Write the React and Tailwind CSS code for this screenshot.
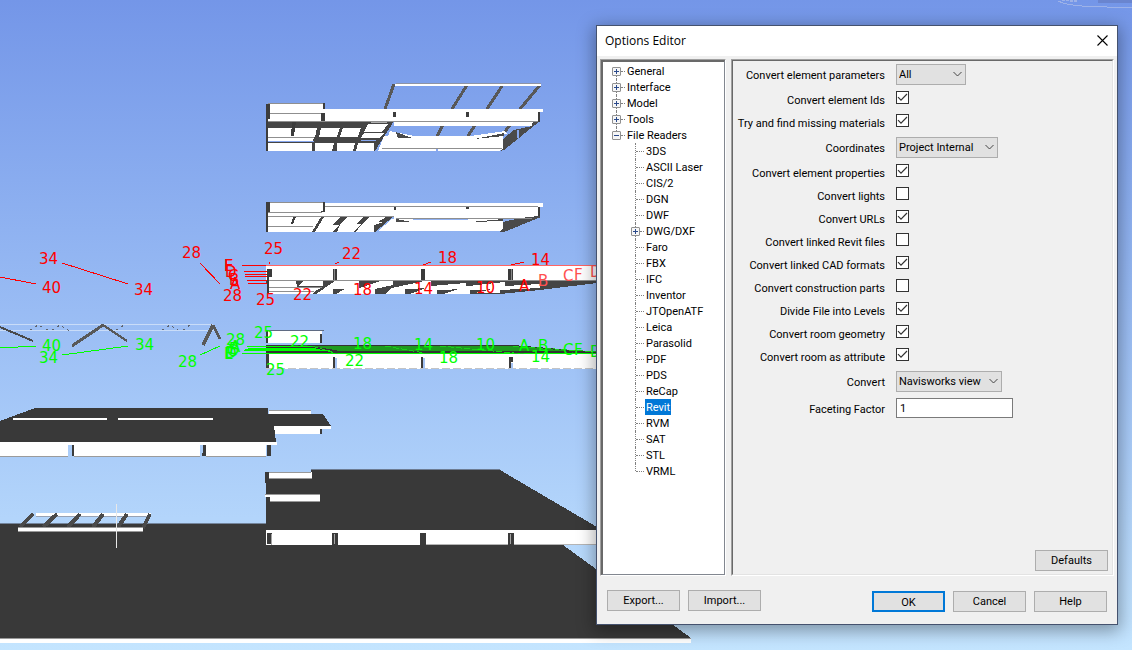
import React, { useState } from "react";

const rootNodes = ["General", "Interface", "Model", "Tools"];

const readers = [
  "3DS",
  "ASCII Laser",
  "CIS/2",
  "DGN",
  "DWF",
  "DWG/DXF",
  "Faro",
  "FBX",
  "IFC",
  "Inventor",
  "JTOpenATF",
  "Leica",
  "Parasolid",
  "PDF",
  "PDS",
  "ReCap",
  "Revit",
  "RVM",
  "SAT",
  "STL",
  "VRML",
];

const fields = [
  { id: "params", label: "Convert element parameters", type: "select", value: "All", width: "w-[70px]" },
  { id: "ids", label: "Convert element Ids", type: "check", value: true },
  { id: "materials", label: "Try and find missing materials", type: "check", value: true },
  { id: "coords", label: "Coordinates", type: "select", value: "Project Internal", width: "w-[102px]" },
  { id: "props", label: "Convert element properties", type: "check", value: true },
  { id: "lights", label: "Convert lights", type: "check", value: false },
  { id: "urls", label: "Convert URLs", type: "check", value: true },
  { id: "linkedRevit", label: "Convert linked Revit files", type: "check", value: false },
  { id: "linkedCad", label: "Convert linked CAD formats", type: "check", value: true },
  { id: "parts", label: "Convert construction parts", type: "check", value: false },
  { id: "levels", label: "Divide File into Levels", type: "check", value: true },
  { id: "roomGeometry", label: "Convert room geometry", type: "check", value: true },
  { id: "roomAttribute", label: "Convert room as attribute", type: "check", value: true },
  { id: "convert", label: "Convert", type: "select", value: "Navisworks view", width: "w-[106px]" },
  { id: "faceting", label: "Faceting Factor", type: "text", value: "1" },
];

// grid labels: text, x, baseline
const redLabels = [
  ["34", 39, 264], ["40", 42, 293], ["34", 134, 295], ["28", 182, 258],
  ["25", 264, 254], ["28", 223, 301], ["25", 256, 305], ["22", 293, 300],
  ["22", 342, 259], ["18", 438, 263], ["14", 531, 265], ["18", 353, 295],
  ["14", 414, 294], ["10", 476, 293], ["A", 519, 291], ["B", 538, 286],
  ["C", 563, 281], ["F", 574, 280], ["D", 590, 277],
  ["F", 224, 271], ["E", 224, 271], ["D", 225, 277], ["C", 228, 281], ["B", 229, 285], ["A", 230, 289],
];

const greenLabels = [
  ["40", 42, 351], ["34", 39, 363], ["34", 135, 350], ["28", 178, 367],
  ["28", 226, 345], ["25", 254, 338], ["22", 290, 347], ["25", 266, 375],
  ["18", 353, 349], ["14", 414, 350], ["10", 476, 350], ["A", 519, 351],
  ["B", 538, 351], ["C", 563, 355], ["F", 574, 355], ["D", 590, 357],
  ["22", 345, 366], ["18", 439, 363], ["14", 531, 362],
  ["A", 230, 352], ["B", 229, 354], ["C", 227, 356], ["D", 225, 358], ["E", 224, 359],
];

const Scene = () => (
  <svg
    width="1132"
    height="650"
    viewBox="0 0 1132 650"
    className="block"
    shapeRendering="crispEdges"
    aria-hidden="true"
  >
    {/* view cube ring */}
    <g fill="none" stroke="#9db2e8" strokeWidth="1">
      <path d="M1058 1 Q1066 5 1082 6 L1132 8" />
      <path d="M1062 0 L1078 1" strokeWidth="2" strokeDasharray="3 1" />
      <path d="M1098 1 H1132" stroke="#6a85cf" strokeWidth="3" />
    </g>

    {/* roof level */}
    <g>
      <g stroke="#585858" strokeWidth="3">
        <path d="M394 84 L385 109 M467 85 L452 109 M502 86 L487 109 M540 85 L520 109" />
        <path d="M443 125 L437 136 M475 125 L468 136 M510 125 L503 134" />
      </g>
      <path d="M396 83 H541 V86 H395 Z" fill="#fff" />
      <path d="M396 83.5 H541" stroke="#8d93a5" />
      <path d="M268 121 H394 L375 151 H268 Z" fill="#454545" />
      <g fill="#fff">
        <path d="M268 103 H324 V121 H268 Z" />
        <path d="M324 109 H543 V112 H538 V121 H324 Z" />
        <path d="M394 121 H533 V126 H394 Z" />
        <path d="M268 128 H317 L315 137 H268 Z" />
        <path d="M321 128 H340 L337 137 H319 Z" />
        <path d="M343 128 H361 L358 137 H340 Z" />
        <path d="M368 124 H388 L382 132 H364 Z" />
        <path d="M364 133 H384 L380 138 H361 Z" />
        <path d="M268 138 H314 L313 141 H268 Z" />
        <path d="M268 143 H312 V151 H268 Z" />
        <path d="M315 143 H334 L332 151 H315 Z" />
        <path d="M337 143 H355 L353 151 H337 Z" />
        <path d="M358 143 H374 V151 H356 Z" />
        <path d="M384 136 H503 V149 L499 151 H378 Z" />
        <path d="M390 131 L414 136 V139 L388 136 Z" />
        <path d="M470 136 L505 131 L507 134 L474 139 Z" />
      </g>
      <path d="M268 141.500 H314 M361 140.500 H376" stroke="#86a6ee" />
      <path d="M374 121 H388 L386 123 H370 Z" fill="#b0b0b0" />
      <path d="M396 132 L412 138 H398 Z M474 139 L504 133 V136 Z" fill="#4a4a4a" />
      <path d="M503 139 L514 130 L532 126 L533 121 H540 L504 150 L500 151 L503 148 Z" fill="#4a4a4a" />
      <path d="M518 130 V138" stroke="#86a6ee" strokeWidth="2" />
      <path d="M268 103.500 H324 M268 113.500 H322 M268 121.500 H538 M268 137.500 H314 M382 148.500 H502" stroke="#8f8f8f" />
      <g fill="#3c3c3c">
        <path d="M266 104 H270 V119 H268 V151 H266 Z" />
        <path d="M323 103 H325 V109 H323 Z M321 113 H325 V121 H321 Z" />
        <path d="M393 112 H396 V117 H393 Z M466 112 H469 V117 H466 Z" />
        <path d="M538 112 H540 V122 H538 Z M292 122 H296 L294 136 H291 Z" />
      </g>
      <path d="M437 149 V152" stroke="#86a6ee" strokeWidth="2" />
    </g>

    {/* upper level */}
    <g>
      <path d="M268 216 H394 L375 232 H268 Z" fill="#454545" />
      <g fill="#fff">
        <path d="M268 202 H324 V216 H268 Z" />
        <path d="M324 203 H543 V207 H538 V217 L532 219 H394 V216 H324 Z" />
        <path d="M268 217 H321 L312 232 H268 Z" />
        <path d="M324 217 H340 L333 225 H340 L332 232 H315 Z" />
        <path d="M347 217 H363 L357 224 H361 L353 232 H337 L340 225 Z" />
        <path d="M369 217 H386 L378 222 H384 L374 225 V232 H356 L361 225 Z" />
        <path d="M392 219 H503 V231 H378 Z" />
      </g>
      <path d="M503 222 L520 218 L538 216 L541 217 L504 232 H499 L503 229 Z" fill="#4a4a4a" />
      <path d="M396 219 L412 222 H396 Z M470 222 L503 219 V221 Z" fill="#4a4a4a" />
      <path d="M413 219.500 H468" stroke="#8fb0f0" />
      <path d="M268 202.500 H324 M268 212.500 H322 M324 206.500 H538 M268 216.500 H394 M396 218.500 H532 M268 226.500 H313" stroke="#8f8f8f" />
      <g fill="#3c3c3c">
        <path d="M266 202 H270 V212 H268 V232 H266 Z" />
        <path d="M323 202 H325 V212 H321 V211 H323 Z" />
        <path d="M394 207 H396 V210 H394 Z M466 207 H469 V209 H466 Z" />
        <path d="M538 207 H540 V216 H538 Z M293 217 H296 L293 224 H291 Z" />
      </g>
    </g>

    {/* red grid level */}
    <g>
      <path d="M266 281 H597 V283 L540 290 L500 294 H268 Z" fill="#454545" />
      <g fill="#fff">
        <path d="M266 265 H597 V281 H266 Z" />
        <path d="M268 281 H296 L297 287 H323 L315 291 L313 294 H268 Z" />
        <path d="M303 281 H323 V286 H299 Z" />
        <path d="M335 281 H359 V289 L333 289 V294 H316 Z" />
        <path d="M380 281 H393 V285 L375 289 V294 H336 L345 289 L359 288 Z" />
        <path d="M424 281 H431 V288 L405 289 V294 H385 L392 288 Z" />
        <path d="M431 286 L466 283 V289 L437 290 V294 H410 Z" />
        <path d="M468 286 L505 282 V289 L470 290 V294 H443 Z" />
        <path d="M505 286 L540 284 V288 L500 290 V293 H475 Z" />
      </g>
      <path d="M268 280.500 H597 M268 287.500 H322 M268 291.500 H314" stroke="#8f8f8f" />
      <g fill="#3a3a3a">
        <path d="M267 269 H272 V277 H269 V293 H267 Z" />
        <path d="M333 269 H337 V280 H333 Z M421 269 H425 V280 H421 Z M508 269 H513 V280 H508 Z" />
      </g>
      <path d="M334.500 269 V280 M511.500 269 V280" stroke="#8a8a8a" />
    </g>

    {/* roof truss */}
    <g fill="none">
      <path d="M0 324.500 H213 M0 330.500 H214" stroke="#c9dcf8" />
      <path
        d="M30 330 L38 325 L48 330 M52 330 L60 325 L70 331 M116 330 L124 325 M162 330 L170 325 L178 330 M183 330 L190 325"
        stroke="#5c6470"
        strokeDasharray="2 4"
      />
      <path d="M0 327 L33 341" stroke="#4a4a4a" strokeWidth="2" />
      <g stroke="#585858">
        <path d="M72 346 L103 325" strokeWidth="3" />
        <path d="M103 325 L127 341" strokeWidth="2" />
        <path d="M203 345 L213 325" strokeWidth="4" />
        <path d="M213 325 L220 339" strokeWidth="3" />
      </g>
    </g>

    {/* green grid level */}
    <g>
      <path d="M268 330 H322 V343 H268 Z" fill="#fff" />
      <path d="M268 330.500 H324" stroke="#5f6b82" />
      <path d="M320 334 H322 V343 H320 Z M266 330 H268 V343 H266 Z" fill="#3c3c3c" />
      <path d="M266 353 H597 V369 H266 Z" fill="#fff" />
      <path d="M266 345 H513 L597 352 V354 H266 Z" fill="#333" />
      <path d="M312 346 H513 L570 351 H340 Z" fill="#1e9a1e" />
      <path d="M266 368.500 H597" stroke="#c4c4c4" strokeDasharray="8 3" />
      <g fill="#3c3c3c">
        <path d="M266 354 H269 V368 H266 Z M333 357 H335 V368 H333 Z" />
        <path d="M421 357 H423 V368 H421 Z M509 357 H513 V362 H511 V368 H509 Z" />
      </g>
      <path d="M336 358 V369 M424 358 V369 M512 363 V369" stroke="#a6c4f4" strokeWidth="2" />
    </g>

    {/* grid lines */}
    <g fill="none" stroke="#f00">
      <path d="M0 277 L36 284 M62 263 L128 284 M200 263 L220 284" />
      <path d="M242 265.500 H267 M244 271.500 H267 M245 274.500 H267 M245 276.500 H267 M247 280.500 H267 M248 283.500 H267" />
      <path d="M266 265.500 H597" stroke="#ff6464" />
      <path d="M335 264 L339 262 M423 265 L431 262 M511 265 L524 262 M269 264 V262" />
    </g>
    <g fill="none" stroke="#0f0">
      <path d="M0 348 L36 346 M62 355 L128 346 M200 355 L220 346" />
      <path d="M242 353.500 H597 M244 350.500 H330 M247 346.500 H312 M248 348.500 H316 M245 349.500 H320" />
      <path d="M312 346 L338 354 M385 346 L430 354 M440 346 L524 354 M513 346 L597 352" stroke="#19d019" strokeDasharray="6 2" />
    </g>

    <g fontFamily="'DejaVu Sans', Verdana, sans-serif" fontSize="15">
      {redLabels.map(([text, x, y], i) => (
        <text key={i} x={x} y={y} fill={y < 292 && x > 535 ? "#ff5050" : "#f00"}>
          {text}
        </text>
      ))}
      {greenLabels.map(([text, x, y], i) => (
        <text key={i} x={x} y={y} fill="#0f0">
          {text}
        </text>
      ))}
    </g>

    {/* second floor slab */}
    <g>
      <path d="M0 421 L35 408 H268 V414 H323 L331 426 H274 L276 442 H0 Z" fill="#393939" />
      <g fill="#fff">
        <path d="M13 418 H107 V420 H13 Z M118 418 H213 V420 H118 Z" />
        <path d="M269 410 H311 V414 H269 Z" />
        <path d="M274 426 H331 V429 H320 V434 H275 Z" />
        <path d="M0 442 H277 V445 H266 V456 H206 V445 H200 V456 H74 V445 H68 V456 H0 Z" />
      </g>
      <path d="M0 456.500 H68 M74 456.500 H200 M206 456.500 H266 M269 410.500 H311" stroke="#9b9b9b" />
      <path d="M72 445 H74 V456 H72 Z M203 445 H206 V456 H202 V453 H203 Z M267 445 H271 V456 H267 Z M320 429 H322 V434 H320 Z" fill="#3c3c3c" />
    </g>

    {/* ground slab */}
    <path d="M0 524 H266 V545 H563 L691 638 H0 Z" fill="#393939" />
    <path d="M0 523.500 H266" stroke="#74859c" />
    <path d="M0 638 H691 V643 H0 Z" fill="#fff" />
    <path d="M0 638.500 H691" stroke="#999" />

    {/* first floor slab */}
    <g>
      <path d="M265 472 H311 V470 H500 L597 527 V530 H266 V483 H265 Z" fill="#393939" />
      <path d="M311 469.500 H500" stroke="#6d7c92" />
      <g fill="#fff">
        <path d="M269 472 H312 V478 H269 Z" />
        <path d="M265 494 H320 V501 H270 V497 H265 Z" />
        <path d="M266 530 H597 V545 H266 Z" />
      </g>
      <path d="M269 472.500 H311 M269 478.500 H312 M265 494.500 H320 M270 501.500 H320" stroke="#999" />
      <path d="M426 544.500 H597" stroke="#b5b5b5" />
      <path d="M267 533 H272 V544 H267 Z M332 533 H338 V545 H332 Z M420 533 H426 V545 H420 Z M508 533 H514 V545 H508 Z" fill="#3a3a3a" />
      <path d="M334.500 534 V544 M510.500 534 V544 M271.500 534 V545" stroke="#a5a5a5" />
    </g>

    {/* skylight frame */}
    <g>
      <path d="M36 513 H151 V516 H36 Z" fill="#fff" />
      <path d="M36 516.500 H150" stroke="#97a2b4" />
      <path d="M33 514 L20 527 M57 514 L43 527 M80 514 L68 527 M103 514 L93 527 M127 514 L118 527 M150 514 L143 528" stroke="#4a4a4a" strokeWidth="4" />
      <path d="M18 527 H143 V531 H18 Z" fill="#fff" />
      <path d="M18 527.500 H143 M18 531.500 H143" stroke="#999" />
      <path d="M116.500 504 V548" stroke="#e8e8e8" />
    </g>
  </svg>
);

const Expander = ({ open, first, last, onClick, label }) => (
  <span className="flex h-4 w-[9px] flex-col items-center">
    <span className={`w-px flex-1 ${first ? "" : "border-l border-dotted border-[#808080]"}`} />
    <button
      type="button"
      aria-label={label}
      onClick={onClick}
      className="flex h-[9px] w-[9px] items-center justify-center rounded-[1px] border border-[#919191] bg-[#f6f6f6]"
    >
      <svg width="5" height="5" viewBox="0 0 5 5" stroke="#2b4a8b" shapeRendering="crispEdges">
        <path d={open ? "M0 2.500 H5" : "M0 2.500 H5 M2.500 0 V5"} />
      </svg>
    </button>
    <span className={`h-[3px] w-px ${last ? "" : "border-l border-dotted border-[#808080]"}`} />
  </span>
);

const Tree = () => {
  const [selected, setSelected] = useState("Revit");
  const [open, setOpen] = useState(true);

  return (
    <ul className="h-full py-px">
      {rootNodes.map((name, i) => (
        <li key={name} className="flex h-4 items-center pl-[9px]">
          <Expander first={i === 0} label={`Expand ${name}`} />
          <span className="w-1 border-t border-dotted border-[#808080]" />
          <button type="button" className="px-0.5 pt-0.5 leading-[14px]">
            {name}
          </button>
        </li>
      ))}
      <li>
        <div className="flex h-4 items-center pl-[9px]">
          <Expander open={open} last label="Toggle File Readers" onClick={() => setOpen(!open)} />
          <span className="w-1 border-t border-dotted border-[#808080]" />
          <button type="button" className="px-0.5 pt-0.5 leading-[14px]">
            File Readers
          </button>
        </div>
        {open && (
          <ul>
            {readers.map((name, i) => (
              <li key={name} className="flex h-4 items-center pl-7">
                {name === "DWG/DXF" ? (
                  <>
                    <Expander label="Expand DWG/DXF" />
                    <span className="w-1 border-t border-dotted border-[#808080]" />
                  </>
                ) : (
                  <>
                    <span
                      className={`ml-1 w-px border-l border-dotted border-[#808080] ${
                        i === readers.length - 1 ? "h-2 self-start" : "h-4"
                      }`}
                    />
                    <span className="w-2 border-t border-dotted border-[#808080]" />
                  </>
                )}
                <button
                  type="button"
                  onClick={() => setSelected(name)}
                  className={`ml-px px-px pt-0.5 leading-[14px] whitespace-nowrap ${
                    selected === name ? "bg-[#0078d7] text-white" : ""
                  }`}
                >
                  {name}
                </button>
              </li>
            ))}
          </ul>
        )}
      </li>
    </ul>
  );
};

const Field = ({ field, value, onChange }) => {
  const isCheck = field.type === "check";

  return (
    <div className={`flex items-start gap-[11px] ${isCheck ? "h-[23px]" : "h-[27px]"}`}>
      <label
        htmlFor={field.id}
        className={`w-[152px] text-right leading-4 whitespace-nowrap ${isCheck ? "mt-0.5" : "mt-1"}`}
      >
        {field.label}
      </label>

      {isCheck && (
        <span className="relative block h-[13px] w-[13px]">
          <input
            id={field.id}
            type="checkbox"
            checked={value}
            onChange={(e) => onChange(field.id, e.target.checked)}
            className="block h-[13px] w-[13px] appearance-none border border-[#333] bg-white"
          />
          {value && (
            <svg
              className="pointer-events-none absolute inset-0"
              width="13"
              height="13"
              viewBox="0 0 13 13"
              fill="none"
              stroke="#333"
              strokeWidth="1.2"
            >
              <path d="M2 6.200 L5 9.200 L11 3" />
            </svg>
          )}
        </span>
      )}

      {field.type === "select" && (
        <span className={`relative block ${field.width}`}>
          <select
            id={field.id}
            value={value}
            onChange={(e) => onChange(field.id, e.target.value)}
            className="block h-[21px] w-full appearance-none border border-[#adadad] bg-[#e1e1e1] pt-0.5 pr-4 pl-0.5"
          >
            <option>{field.value}</option>
          </select>
          <svg
            className="pointer-events-none absolute top-[7px] right-1"
            width="9"
            height="7"
            viewBox="0 0 9 7"
            fill="none"
            stroke="#444"
          >
            <path d="M0.500 1 L4.500 5 L8.500 1" />
          </svg>
        </span>
      )}

      {field.type === "text" && (
        <input
          id={field.id}
          type="text"
          value={value}
          onChange={(e) => onChange(field.id, e.target.value)}
          className="h-5 w-[117px] border border-[#7a7a7a] bg-white px-[3px]"
        />
      )}
    </div>
  );
};

const Button = ({ children, primary }) => (
  <button
    type="button"
    className={`h-[21px] w-[73px] bg-[#e1e1e1] pt-0.5 ${
      primary ? "border-2 border-[#0078d7]" : "border border-[#adadad]"
    }`}
  >
    {children}
  </button>
);

const App = () => {
  const [values, setValues] = useState(
    Object.fromEntries(fields.map((f) => [f.id, f.value]))
  );

  const handleChange = (id, value) => {
    setValues((prev) => ({ ...prev, [id]: value }));
  };

  return (
    <div className="relative h-screen overflow-hidden bg-linear-to-b from-[#7496e8] to-[#c4e5ff]">
      <Scene />

      <div
        role="dialog"
        aria-labelledby="dialog-title"
        className="absolute top-[25px] left-[596px] flex h-[600px] w-[522px] flex-col border border-[#45526e] bg-[#f0f0f0] font-['Roboto',Tahoma,sans-serif] text-[11px] text-black shadow-[0_4px_16px_2px_rgba(0,0,0,0.35)]"
      >
        {/* Title bar */}
        <div className="flex h-[30px] items-center justify-between bg-white pr-[9px] pl-2">
          <h1 id="dialog-title" className="font-['Open_Sans','Segoe_UI',sans-serif] text-xs">
            Options Editor
          </h1>
          <button type="button" aria-label="Close" className="pb-0.5">
            <svg width="11" height="11" viewBox="0 0 11 11" stroke="#000" strokeWidth="1.1">
              <path d="M0.500 0.500 L10.500 10.500 M10.500 0.500 L0.500 10.500" />
            </svg>
          </button>
        </div>

        <div className="flex min-h-0 flex-1 gap-[5px] px-[3px] pt-[3px]">
          {/* Tree */}
          <div className="w-[126px] border border-t-[#a0a0a0] border-r-white border-b-white border-l-[#a0a0a0]">
            <div className="h-full border-t-2 border-r border-b border-l-2 border-[#696969] border-r-[#828790] border-b-[#828790] bg-white">
              <Tree />
            </div>
          </div>

          {/* Settings */}
          <div className="flex-1 border border-t-[#a0a0a0] border-r-white border-b-white border-l-[#a0a0a0]">
            <div className="flex h-full flex-col border border-t-[#696969] border-r-[#e3e3e3] border-b-[#e3e3e3] border-l-[#696969] pt-[3px]">
              {fields.map((field) => (
                <Field
                  key={field.id}
                  field={field}
                  value={values[field.id]}
                  onChange={handleChange}
                />
              ))}
              <div className="mt-auto flex justify-end pr-1 pb-[3px]">
                <Button>Defaults</Button>
              </div>
            </div>
          </div>
        </div>

        {/* Actions */}
        <div className="flex h-12 items-start justify-between pt-3.5 pr-2.5 pl-2.5">
          <div className="flex gap-2">
            <Button>Export...</Button>
            <Button>Import...</Button>
          </div>
          <div className="flex gap-2 pt-px">
            <Button primary>OK</Button>
            <Button>Cancel</Button>
            <Button>Help</Button>
          </div>
        </div>
      </div>
    </div>
  );
};

export default App;
